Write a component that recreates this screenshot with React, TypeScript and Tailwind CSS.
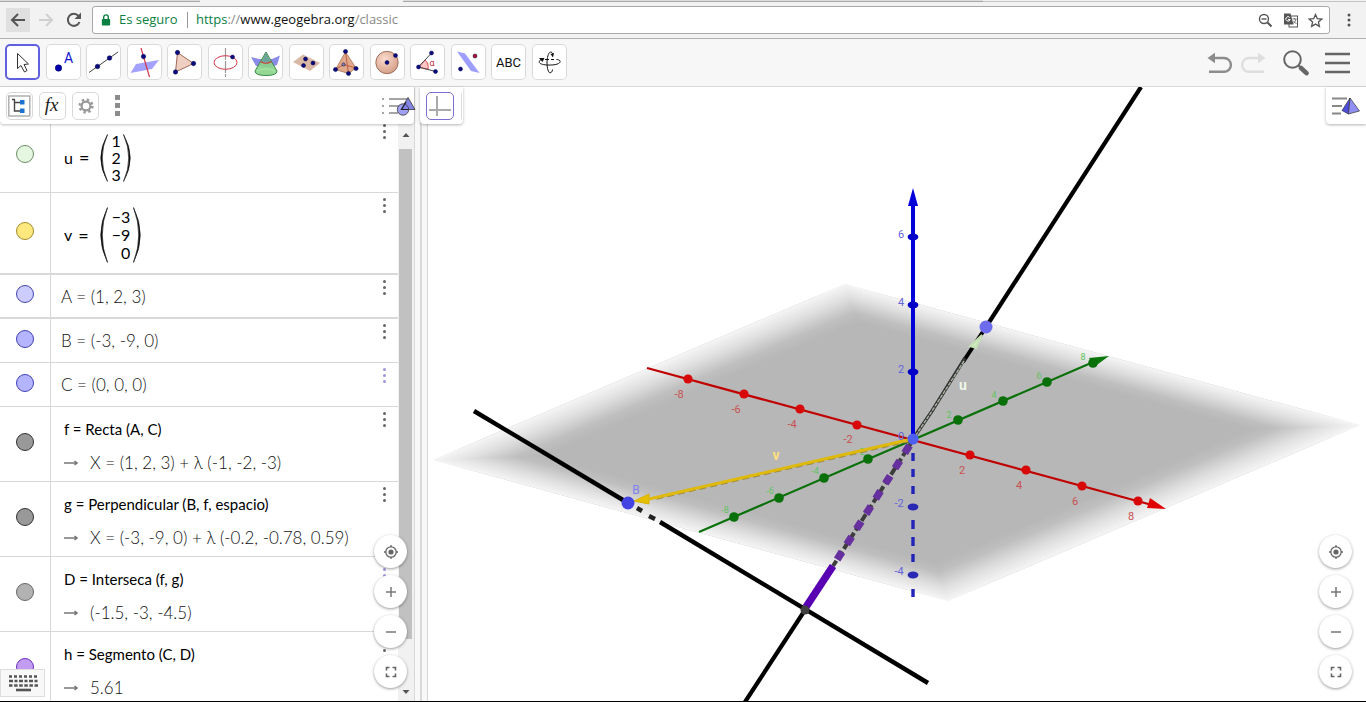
import type { ReactNode } from "react";
import clsx from "clsx";

type Tool = {
    name: string;
    icon: ReactNode;
};

type AlgebraItem = {
    label: string;
    color: string;
    height: string;
    auxiliary?: boolean;
    content: ReactNode;
};

type Tick = {
    x: number;
    y: number;
    text: string;
    labelX: number;
    labelY: number;
};

const NAVY = "#0b0b80";

function Dot({ x, y, r = 2, fill = NAVY }: { x: number; y: number; r?: number; fill?: string }) {
    return <circle cx={x} cy={y} r={r} fill={fill} stroke="#00004a" strokeWidth="0.5" />;
}

const tools: Tool[] = [
    {
        name: "Elige y mueve",
        icon: (
            <path
                d="M11.5 8.5 V23.5 L15 20.5 L18.5 27 L21 25.5 L18 19.5 L22.5 19 Z"
                fill="#fff"
                stroke="#333"
                strokeWidth="1"
            />
        ),
    },
    {
        name: "Punto",
        icon: (
            <>
                <circle cx="11.5" cy="23" r="3.2" fill="#0000b0" stroke="#00005a" strokeWidth="0.6" />
                <text x="17" y="18" fontSize="14" fill="#1414d2">
                    A
                </text>
            </>
        ),
    },
    {
        name: "Recta",
        icon: (
            <>
                <path d="M2 27.5 L31 7" stroke="#444" strokeWidth="1" />
                <Dot x={10.5} y={21.5} r={2.3} />
                <Dot x={22.5} y={13} r={2.3} />
            </>
        ),
    },
    {
        name: "Recta perpendicular",
        icon: (
            <>
                <path d="M8 19 L31 15 L24 24 L2.5 28 Z" fill="#a3a3ff" />
                <path d="M13 3 L21.5 32" stroke="#d2384b" strokeWidth="1.2" />
                <Dot x={15.5} y={11.5} r={2.2} />
            </>
        ),
    },
    {
        name: "Polígono",
        icon: (
            <>
                <path d="M9.5 7.5 L25.5 18.5 L7.5 27 Z" fill="#f0cfc3" stroke="#a06a58" strokeWidth="1" />
                <Dot x={9.5} y={7.5} r={2.2} />
                <Dot x={25.5} y={18.5} r={2.2} />
                <Dot x={7.5} y={27} r={2.2} />
            </>
        ),
    },
    {
        name: "Circunferencia",
        icon: (
            <>
                <path d="M16.5 3 V32" stroke="#999" strokeWidth="1.2" strokeDasharray="12 1" />
                <ellipse cx="16.5" cy="17.5" rx="11.5" ry="6.8" fill="none" stroke="#d2384b" strokeWidth="1" />
                <Dot x={23.5} y={12} r={2} />
            </>
        ),
    },
    {
        name: "Intersección",
        icon: (
            <>
                <path d="M2 12 L10 14 L23 14 L31 10.5 L28 20 L20 22.5 L7 21 Z" fill="#8b8bea" />
                <path d="M17 7 L6 26 Q6 30.5 17 30.5 Q28 30.5 28 26 Z" fill="#8ad48a" fillOpacity="0.9" stroke="#3b8b4a" />
                <path d="M17 7.5 L12.5 16.5 Q17 19 21.5 16.5 Z" fill="#6aa49a" />
                <path d="M11.5 16.5 Q17 20 22.5 16.5" stroke="#d23b3b" strokeWidth="1.2" fill="none" />
                <path d="M8 26 Q17 22 26 26" stroke="#a8e8a8" fill="none" />
            </>
        ),
    },
    {
        name: "Plano por tres puntos",
        icon: (
            <>
                <path d="M3 17 L13 9.5 L30 18 L20 26 Z" fill="#d9b8a6" />
                <Dot x={15.5} y={14} />
                <Dot x={23} y={18} />
                <Dot x={13.5} y={20.5} />
            </>
        ),
    },
    {
        name: "Pirámide",
        icon: (
            <>
                <path d="M15.5 7 L5.5 24.5 L18.5 28.5 L26 23 Z" fill="#e0a98e" stroke="#a8704f" strokeWidth="0.8" />
                <path d="M15.5 7 L18.5 28.5 M5.5 24.5 L13.5 19.5 L26 23" stroke="#b4502f" strokeWidth="0.8" fill="none" />
                <Dot x={13.5} y={19.5} r={1.6} fill="#8080a8" />
                <Dot x={15.5} y={6.5} r={2.1} />
                <Dot x={5.5} y={24.5} r={2.1} />
                <Dot x={18.5} y={28.5} r={2.1} />
                <Dot x={26} y={23.5} r={2.1} />
            </>
        ),
    },
    {
        name: "Esfera",
        icon: (
            <>
                <circle cx="16" cy="17.5" r="11.2" fill="url(#sphere)" stroke="#8c5a48" strokeWidth="0.8" />
                <Dot x={16} y={17.5} />
                <Dot x={24.5} y={10.5} />
            </>
        ),
    },
    {
        name: "Ángulo",
        icon: (
            <>
                <path d="M7.5 22 L14 15 Q18 18 17 24.5 Z" fill="#ffc4c4" stroke="#d2384b" strokeWidth="0.9" />
                <path d="M20.5 8 L7.5 22 L24.5 26.5" stroke="#444" strokeWidth="1" fill="none" />
                <text x="18.5" y="20.5" fontSize="9" fill="#c8283c">
                    α
                </text>
                <Dot x={20.5} y={8} />
                <Dot x={7.5} y={22} />
                <Dot x={24.5} y={26.5} />
            </>
        ),
    },
    {
        name: "Simetría",
        icon: (
            <>
                <path d="M5 6.5 L13 8.5 L27.5 28 L19 26 Z" fill="#9d9dff" />
                <Dot x={8.5} y={24} />
                <Dot x={23} y={11} fill="#b01020" />
            </>
        ),
    },
    {
        name: "Texto",
        icon: (
            <text x="16.5" y="22" fontSize="13" fill="#111" textAnchor="middle">
                ABC
            </text>
        ),
    },
    {
        name: "Rota la vista gráfica 3D",
        icon: (
            <g fill="none" stroke="#111" strokeWidth="1">
                <path d="M20 9 C18 5 14.5 7 14 17 C14 25 16 29 18 27.5 C19 27 19.5 25.5 19.5 24.5" />
                <path d="M8 14.5 C4.5 17 6 19.5 14 20 C24 20.5 28 18 27 16 C26.5 15 25 14.5 23.5 14.5" />
                <path d="M12 14.5 H21" strokeDasharray="4 2" />
                <path d="M21 8 L20 12.5 L17.5 9 Z M6 13 L11.5 13 L9.5 17 Z" fill="#111" stroke="none" />
            </g>
        ),
    },
];

function Matrix({ values, tall }: { values: string[]; tall?: boolean }) {
    const size = tall ? "h-[56px]" : "h-[48px]";

    return (
        <span className="ml-2.5 flex items-center">
            <svg viewBox="0 0 9 48" preserveAspectRatio="none" className={clsx("w-[9px]", size)} aria-hidden="true">
                <path d="M8.5 0.5 Q-5 24 8.5 47.5 Q-2 24 8.5 0.5" fill="#111" stroke="#111" strokeWidth="0.6" />
            </svg>
            <span
                className={clsx(
                    "flex flex-col text-right",
                    tall ? "pr-[3px] pl-1 leading-[18px]" : "pr-0.5 pl-[3px] leading-[17px]"
                )}
            >
                {values.map((value) => (
                    <span key={value}>{value}</span>
                ))}
            </span>
            <svg viewBox="0 0 9 48" preserveAspectRatio="none" className={clsx("w-[9px]", size)} aria-hidden="true">
                <path d="M0.5 0.5 Q14 24 0.5 47.5 Q11 24 0.5 0.5" fill="#111" stroke="#111" strokeWidth="0.6" />
            </svg>
        </span>
    );
}

function VectorDefinition({ name, values, tall }: { name: string; values: string[]; tall?: boolean }) {
    return (
        <div className="flex h-full items-center pt-1 pl-[13px] text-[16px] text-black">
            <span>{name}</span>
            <span className="ml-1.5 text-[18px]">=</span>
            <Matrix values={values} tall={tall} />
        </div>
    );
}

function PointDefinition({ text }: { text: string }) {
    return <div className="flex h-full items-center pt-px pl-2.5 text-[17px] font-light text-[#111]">{text}</div>;
}

function CommandDefinition({ command, output }: { command: string; output: string }) {
    return (
        <div className="pt-[5px] pl-[13px]">
            <p className="text-[15px] leading-[34px] text-black">{command}</p>
            <p className="flex items-center text-[17px] leading-[34px] font-light text-[#111]">
                <svg viewBox="0 0 14 8" className="mr-3 h-2 w-3.5" aria-hidden="true">
                    <path d="M0 4 H13 M10.5 2 L13 4 L10.5 6" stroke="#777" strokeWidth="1.5" fill="none" />
                </svg>
                {output}
            </p>
        </div>
    );
}

const algebraItems: AlgebraItem[] = [
    {
        label: "u",
        color: "bg-[#e6f7e1] border-[#6b8f65]",
        height: "h-[74px] border-b",
        content: <VectorDefinition name="u" values={["1", "2", "3"]} />,
    },
    {
        label: "v",
        color: "bg-[#ffe97f] border-[#a08a2c]",
        height: "h-[82px] border-b-2",
        content: <VectorDefinition name="v" values={["−3", "−9", "0"]} tall />,
    },
    {
        label: "A",
        color: "bg-[#ccccff] border-[#4545b0]",
        height: "h-[44px] border-b-2",
        content: <PointDefinition text="A = (1, 2, 3)" />,
    },
    {
        label: "B",
        color: "bg-[#b5b5ff] border-[#4040b8]",
        height: "h-[44px] border-b",
        content: <PointDefinition text="B = (-3, -9, 0)" />,
    },
    {
        label: "C",
        color: "bg-[#b5b5ff] border-[#4040b8]",
        height: "h-[44px] border-b",
        auxiliary: true,
        content: <PointDefinition text="C = (0, 0, 0)" />,
    },
    {
        label: "f",
        color: "bg-[#999999] border-[#333333]",
        height: "h-[75px] border-b",
        content: <CommandDefinition command="f = Recta (A, C)" output="X = (1, 2, 3) + λ (-1, -2, -3)" />,
    },
    {
        label: "g",
        color: "bg-[#999999] border-[#333333]",
        height: "h-[75px] border-b",
        content: (
            <CommandDefinition
                command="g = Perpendicular (B, f, espacio)"
                output="X = (-3, -9, 0) + λ (-0.2, -0.78, 0.59)"
            />
        ),
    },
    {
        label: "D",
        color: "bg-[#b2b2b2] border-[#666666]",
        height: "h-[75px] border-b",
        auxiliary: true,
        content: <CommandDefinition command="D = Interseca (f, g)" output="(-1.5, -3, -4.5)" />,
    },
    {
        label: "h",
        color: "bg-[#c29cf0] border-[#6a2fc0]",
        height: "h-[75px] border-b",
        content: <CommandDefinition command="h = Segmento (C, D)" output="5.61" />,
    },
];

function AlgebraRow({ item }: { item: AlgebraItem }) {
    return (
        <li className={clsx("relative flex shrink-0 border-[#d8d8d8]", item.height)}>
            <div className="flex w-[51px] shrink-0 items-center justify-center border-r border-[#d8d8d8] pb-1">
                <button
                    type="button"
                    aria-label={`Mostrar u ocultar ${item.label}`}
                    className={clsx("size-[18px] rounded-full border", item.color)}
                />
            </div>
            <div className="min-w-0 flex-1 whitespace-nowrap">{item.content}</div>
            <button
                type="button"
                aria-label={`Opciones de ${item.label}`}
                className={clsx(
                    "absolute top-1 right-3 flex h-[17px] w-1 flex-col items-center justify-between py-px",
                    item.auxiliary ? "text-[#9c96dc]" : "text-[#666]"
                )}
            >
                <span className="size-[3px] rounded-full bg-current" />
                <span className="size-[3px] rounded-full bg-current" />
                <span className="size-[3px] rounded-full bg-current" />
            </button>
        </li>
    );
}

function ZoomControls({ className }: { className?: string }) {
    const buttonClass =
        "flex size-[33px] items-center justify-center rounded-full bg-white shadow-[0_1px_3px_rgba(0,0,0,0.4)]";

    return (
        <div className={clsx("absolute bottom-[13px] flex flex-col gap-[7px]", className)}>
            <button type="button" aria-label="Vista estándar" className={buttonClass}>
                <svg viewBox="0 0 16 16" className="size-4" fill="none" stroke="#666" strokeWidth="1.3">
                    <circle cx="8" cy="8" r="5.2" />
                    <circle cx="8" cy="8" r="2.6" fill="#666" stroke="none" />
                    <path d="M8 1 V3 M8 13 V15 M1 8 H3 M13 8 H15" />
                </svg>
            </button>
            <button type="button" aria-label="Acercar" className={buttonClass}>
                <svg viewBox="0 0 16 16" className="size-4" stroke="#777" strokeWidth="1.5">
                    <path d="M3 8 H13 M8 3 V13" />
                </svg>
            </button>
            <button type="button" aria-label="Alejar" className={buttonClass}>
                <svg viewBox="0 0 16 16" className="size-4" stroke="#777" strokeWidth="1.5">
                    <path d="M3 8 H13" />
                </svg>
            </button>
            <button type="button" aria-label="Pantalla completa" className={buttonClass}>
                <svg viewBox="0 0 16 16" className="size-4" fill="none" stroke="#666" strokeWidth="1.6">
                    <path d="M3.5 6.5 V3.5 H6.5 M9.5 3.5 H12.5 V6.5 M12.5 9.5 V12.5 H9.5 M6.5 12.5 H3.5 V9.5" />
                </svg>
            </button>
        </div>
    );
}

function BrowserBar() {
    return (
        <header className="shrink-0 border-b border-[#b0b0b0] bg-[#f2f2f2]">
            <div className="flex h-0.5">
                <span className="w-[200px] border-b border-[#a8a8a8] bg-[#dcdcdc]" />
                <span className="w-[203px]" />
                <span className="w-[580px] border-b border-[#a8a8a8] bg-[#dcdcdc]" />
                <span className="flex-1 border-b border-[#c4c4c4]" />
            </div>
            <div className="flex h-9 items-center pr-3.5 pl-1.5">
                <button type="button" aria-label="Atrás" className="flex size-6 items-center justify-center bg-[#e0e0e0]">
                    <svg viewBox="0 0 16 16" className="size-4" fill="none" stroke="#555" strokeWidth="2">
                        <path d="M15 8 H2.5 M8 2 L2 8 L8 14" />
                    </svg>
                </button>
                <button type="button" aria-label="Adelante" className="ml-1 flex size-6 items-center justify-center">
                    <svg viewBox="0 0 16 16" className="size-4" fill="none" stroke="#d0d0d0" strokeWidth="2">
                        <path d="M1 8 H13.5 M8 2 L14 8 L8 14" />
                    </svg>
                </button>
                <button type="button" aria-label="Recargar" className="ml-1 flex size-6 items-center justify-center">
                    <svg viewBox="0 0 16 16" className="size-4" fill="none" stroke="#555" strokeWidth="2">
                        <path d="M13.5 10 A6 6 0 1 1 12.5 4" />
                        <path d="M15 0.5 V7 H8.5 Z" fill="#555" stroke="none" />
                    </svg>
                </button>
                <div className="ml-1.5 flex h-7 min-w-0 flex-1 items-center rounded-[3px] border border-[#a9a9a9] bg-white pr-1.5 pl-2 font-['Open_Sans',sans-serif] text-[13px]">
                    <svg viewBox="0 0 10 13" className="h-3 w-2.5" aria-hidden="true">
                        <path d="M2.5 6 V3.5 A2.5 2.5 0 0 1 7.5 3.5 V6" fill="none" stroke="#0b8043" strokeWidth="1.5" />
                        <rect x="0.5" y="5.5" width="9" height="7" rx="0.8" fill="#0b8043" />
                    </svg>
                    <span className="ml-2 w-[60px] whitespace-nowrap text-[#0b8043]">Es seguro</span>
                    <span className="ml-2 h-4 w-px bg-[#999]" />
                    <div
                        role="textbox"
                        aria-label="Dirección"
                        className="ml-2 flex-1 whitespace-nowrap text-[#888]"
                    >
                        <span className="text-[#0b8043]">https</span>://
                        <span className="text-[#111]">www.geogebra.org</span>/classic
                    </div>
                    <div className="flex items-center gap-2.5">
                        <button type="button" aria-label="Zoom">
                            <svg viewBox="0 0 15 15" className="size-[15px]" fill="none" stroke="#555" strokeWidth="1.4">
                                <circle cx="6" cy="6" r="4.5" />
                                <path d="M3.5 6 H8.5" />
                                <path d="M9.5 9.5 L13.5 13.5" strokeWidth="2" />
                            </svg>
                        </button>
                        <button type="button" aria-label="Traducir esta página">
                            <svg viewBox="0 0 15 15" className="size-[15px]">
                                <rect x="6" y="3" width="8.5" height="11" fill="#fff" stroke="#555" strokeWidth="1" />
                                <path d="M1 0.5 H7.5 L10.5 11.5 H1 Z" fill="#555" />
                                <path d="M6.8 4.5 A2.2 2.2 0 1 0 7.2 6.5 H5" fill="none" stroke="#fff" strokeWidth="1" />
                                <path d="M9.5 6 H13.5 M11.5 5 V6 M13 6 Q12.5 9 10 10.5 M10.5 8 L13.5 11" fill="none" stroke="#666" strokeWidth="0.9" />
                            </svg>
                        </button>
                        <button type="button" aria-label="Añadir a marcadores">
                            <svg viewBox="0 0 15 15" className="size-[15px]" fill="none" stroke="#555" strokeWidth="1.3">
                                <path d="M7.5 1.5 L9.3 5.7 L13.8 6.1 L10.4 9 L11.4 13.4 L7.5 11.1 L3.6 13.4 L4.6 9 L1.2 6.1 L5.7 5.7 Z" />
                            </svg>
                        </button>
                    </div>
                </div>
                <button type="button" aria-label="Menú de Chrome" className="ml-4 flex h-6 w-1.5 items-center justify-center">
                    <svg viewBox="0 0 4 14" className="h-3.5 w-1" fill="#555">
                        <circle cx="2" cy="2" r="1.5" />
                        <circle cx="2" cy="7" r="1.5" />
                        <circle cx="2" cy="12" r="1.5" />
                    </svg>
                </button>
            </div>
        </header>
    );
}

function Toolbar() {
    return (
        <nav className="flex h-12 shrink-0 items-center justify-between border-b border-[#d9d9d9] bg-[#f7f7f7] pr-4 pb-px pl-[5px]">
            <svg className="absolute size-0" aria-hidden="true">
                <defs>
                    <radialGradient id="sphere" cx="0.4" cy="0.35" r="0.7">
                        <stop offset="0" stopColor="#fbdccd" />
                        <stop offset="1" stopColor="#d39c84" />
                    </radialGradient>
                </defs>
            </svg>
            <div className="flex w-[562px] justify-between">
                {tools.map((tool, index) => (
                    <button
                        key={tool.name}
                        type="button"
                        aria-label={tool.name}
                        className={clsx(
                            "h-9 w-[35px] rounded-[5px] bg-white",
                            index === 0
                                ? "shadow-[inset_0_0_0_2px_#6161e0]"
                                : "shadow-[inset_0_0_0_1px_#d9d9d9]"
                        )}
                    >
                        <svg viewBox="-1 -1 35 36" className="h-9 w-[35px] font-[Roboto,sans-serif]" fill="none">
                            {tool.icon}
                        </svg>
                    </button>
                ))}
            </div>
            <div className="flex items-center pt-px">
                <button type="button" aria-label="Deshacer" className="mr-[7px]">
                    <svg viewBox="0 0 26 22" className="h-[22px] w-[26px]" fill="none" stroke="#8c8c8c" strokeWidth="2.4">
                        <path d="M6 6 H17 A6.8 6.8 0 0 1 17 19.8 H2" />
                        <path d="M0.5 6 L8 0.8 V11.2 Z" fill="#8c8c8c" stroke="none" />
                    </svg>
                </button>
                <button type="button" aria-label="Rehacer" className="mr-[17px]">
                    <svg viewBox="0 0 26 22" className="h-[22px] w-[26px]" fill="none" stroke="#dedede" strokeWidth="2.4">
                        <path d="M20 6 H9 A6.8 6.8 0 0 0 9 19.8 H24" />
                        <path d="M25.5 6 L18 0.8 V11.2 Z" fill="#dedede" stroke="none" />
                    </svg>
                </button>
                <button type="button" aria-label="Buscar" className="mr-4">
                    <svg viewBox="0 0 26 26" className="size-[26px]" fill="none" stroke="#666">
                        <circle cx="9.5" cy="9.5" r="8.3" strokeWidth="2" />
                        <path d="M15.5 15.5 L18 18" strokeWidth="2" />
                        <path d="M18 18 L23.5 23.2" strokeWidth="4.5" strokeLinecap="round" />
                    </svg>
                </button>
                <button type="button" aria-label="Menú">
                    <svg viewBox="0 0 25 22" className="h-[22px] w-[25px]" stroke="#666" strokeWidth="2.6">
                        <path d="M0 2 H25 M0 11 H25 M0 20 H25" />
                    </svg>
                </button>
            </div>
        </nav>
    );
}

function AlgebraHeader() {
    const buttonClass = "flex h-7 w-[27px] items-center justify-center rounded-[5px] border border-[#d9d9d9] bg-white";

    return (
        <div className="relative z-10 flex h-[37px] w-full shrink-0 items-center gap-1.5 rounded-b bg-white pl-1.5 shadow-[0_1px_3px_rgba(0,0,0,0.25)]">
            <button type="button" aria-label="Objetos auxiliares" className={buttonClass}>
                <svg viewBox="0 0 23 22" className="h-[22px] w-[23px]" fill="none">
                    <rect x="0.8" y="1" width="21" height="20" stroke="#aaa" strokeWidth="1.4" />
                    <path d="M4 4.5 H7 M6.5 4.5 V16 H12 M6.5 7.5 H12" stroke="#444" strokeWidth="1.4" />
                    <rect x="12" y="5" width="4.5" height="4.5" fill="#1a73d0" />
                    <rect x="12" y="13.5" width="4.5" height="4.5" fill="#1a73d0" />
                </svg>
            </button>
            <button
                type="button"
                aria-label="Función"
                className={clsx(buttonClass, "pr-0.5 font-['Liberation_Serif',serif] text-[19px] text-[#222] italic")}
            >
                fx
            </button>
            <button type="button" aria-label="Configuración" className={buttonClass}>
                <svg viewBox="0 0 16 16" className="size-4" fill="none" stroke="#999">
                    <circle cx="8" cy="8" r="4.4" strokeWidth="2.2" />
                    <circle cx="8" cy="8" r="6.4" strokeWidth="2.4" strokeDasharray="2.4 2.62" />
                </svg>
            </button>
            <button type="button" aria-label="Más" className="ml-2.5 flex flex-col gap-[3px]">
                <span className="size-[5px] bg-[#8c8c8c]" />
                <span className="size-[5px] bg-[#8c8c8c]" />
                <span className="size-[5px] bg-[#8c8c8c]" />
            </button>
            <button type="button" aria-label="Barra de estilo" className="-mr-0.5 ml-auto">
                <svg viewBox="0 0 35 24" className="h-6 w-[35px]" fill="none">
                    <path d="M1 5 H3 M1 12 H3 M1 19 H3 M8 5 H26 M8 12 H18 M8 19 H17" stroke="#888" strokeWidth="1.7" />
                    <path d="M27 3.5 L34 15.5 H20 Z" fill="#8484e6" stroke="#444" strokeWidth="0.9" />
                    <circle cx="22" cy="15.5" r="5.7" fill="#7f7ff0" fillOpacity="0.75" stroke="#444" strokeWidth="0.9" />
                    <path d="M25 8 L20.5 15.5 H27.5" stroke="#222" strokeWidth="1.2" />
                </svg>
            </button>
        </div>
    );
}

function AlgebraPanel() {
    return (
        <section aria-label="Vista algebraica" className="relative flex w-[414px] shrink-0 flex-col bg-white">
            <AlgebraHeader />
            <div className="flex min-h-0 flex-1">
                <ul className="-mt-[5px] flex min-w-0 flex-1 flex-col overflow-hidden font-[Lato,sans-serif]">
                    {algebraItems.map((item) => (
                        <AlgebraRow key={item.label} item={item} />
                    ))}
                </ul>
                <div className="flex w-4 shrink-0 flex-col items-center bg-[#f1f1f1]">
                    <svg viewBox="0 0 14 25" className="h-[25px] w-3.5" fill="#555">
                        <path d="M3.5 13 L7 9 L10.5 13 Z" />
                    </svg>
                    <div className="mr-px w-[13px] flex-1 bg-[#c1c1c1]" />
                    <svg viewBox="0 0 14 62" className="h-[62px] w-3.5" fill="#555">
                        <path d="M3.5 51 H10.5 L7 55 Z" />
                    </svg>
                </div>
            </div>
            <ZoomControls className="right-[7px]" />
            <button
                type="button"
                aria-label="Teclado"
                className="absolute bottom-1 left-0 flex h-7 w-[45px] items-center justify-center border border-[#ddd] bg-[#f8f8f8]"
            >
                <svg viewBox="0 0 30 18" className="h-[18px] w-[30px]" stroke="#555" fill="none" strokeWidth="2.6">
                    <path d="M1 2.5 H30" strokeDasharray="3 2" />
                    <path d="M1 7 H30" strokeDasharray="4 1.5 3 1.5" />
                    <path d="M1 11.5 H30" strokeDasharray="3.5 1.6" />
                    <path d="M8 16 H23" />
                </svg>
            </button>
        </section>
    );
}

const xTicks: Tick[] = [
    { x: 688, y: 379, text: "-8", labelX: 679, labelY: 398 },
    { x: 744, y: 394, text: "-6", labelX: 736, labelY: 413 },
    { x: 800, y: 409, text: "-4", labelX: 792, labelY: 428 },
    { x: 857, y: 425, text: "-2", labelX: 848, labelY: 443 },
    { x: 970, y: 455, text: "2", labelX: 962, labelY: 474 },
    { x: 1026, y: 470, text: "4", labelX: 1019, labelY: 489 },
    { x: 1082, y: 486, text: "6", labelX: 1075, labelY: 505 },
    { x: 1138, y: 501, text: "8", labelX: 1131, labelY: 520 },
];

const yTicks: Tick[] = [
    { x: 734, y: 517, text: "-8", labelX: 725, labelY: 513 },
    { x: 779, y: 498, text: "-6", labelX: 770, labelY: 494 },
    { x: 824, y: 478, text: "-4", labelX: 815, labelY: 474 },
    { x: 868, y: 459, text: "-2", labelX: 861, labelY: 455 },
    { x: 958, y: 420, text: "2", labelX: 949, labelY: 418 },
    { x: 1003, y: 401, text: "4", labelX: 994, labelY: 398 },
    { x: 1047, y: 382, text: "6", labelX: 1039, labelY: 379 },
    { x: 1093, y: 363, text: "8", labelX: 1083, labelY: 360 },
];

const zTicks: Tick[] = [
    { x: 913, y: 237, text: "6", labelX: 901, labelY: 238 },
    { x: 913, y: 305, text: "4", labelX: 901, labelY: 306 },
    { x: 913, y: 372, text: "2", labelX: 901, labelY: 373 },
    { x: 913, y: 507, text: "-2", labelX: 899, labelY: 507 },
    { x: 913, y: 575, text: "-4", labelX: 899, labelY: 575 },
];

function Scene() {
    return (
        <svg
            viewBox="428 87 938 614"
            preserveAspectRatio="xMidYMid slice"
            className="absolute inset-0 h-full w-full font-[Roboto,sans-serif]"
            fontSize="11"
            textAnchor="middle"
            role="img"
            aria-label="Vista gráfica 3D"
        >
            <defs>
                <linearGradient id="fadeX">
                    <stop offset="0" stopColor="#f5f5f5" />
                    <stop offset="0.04" stopColor="#e0e0e0" />
                    <stop offset="0.09" stopColor="#bfbfbf" />
                    <stop offset="0.12" stopColor="#b7b7b7" />
                    <stop offset="0.88" stopColor="#b7b7b7" />
                    <stop offset="0.91" stopColor="#bfbfbf" />
                    <stop offset="0.96" stopColor="#e0e0e0" />
                    <stop offset="1" stopColor="#f5f5f5" />
                </linearGradient>
                <linearGradient id="fadeY" href="#fadeX" x1="0" y1="0" x2="0" y2="1" />
            </defs>

            {/* plane z = 0, fading towards all four edges */}
            <g transform="matrix(4.12 -1.76 5.15 1.41 433 460)" className="isolate">
                <rect width="100" height="100" fill="url(#fadeX)" />
                <rect width="100" height="100" fill="url(#fadeY)" className="mix-blend-lighten" />
            </g>

            {/* x axis */}
            <g fill="#e00000">
                <path d="M647 368 L1152 505" stroke="#c00000" strokeWidth="2.2" />
                <path d="M1150 498 L1166 509 L1147 508 Z" />
                {xTicks.map((tick) => (
                    <circle key={tick.text} cx={tick.x} cy={tick.y} r="4.6" fill="#d80808" />
                ))}
            </g>
            <g fill="#c85050">
                {xTicks.map((tick) => (
                    <text key={tick.text} x={tick.labelX} y={tick.labelY}>
                        {tick.text}
                    </text>
                ))}
            </g>

            {/* y axis */}
            <path d="M699 532 L1098 360" stroke="#0a700a" strokeWidth="2.2" />
            <path d="M1109 356 L1089 358 L1094 367 Z" fill="#0a780a" />
            {yTicks.map((tick) => (
                <circle key={tick.text} cx={tick.x} cy={tick.y} r="4.8" fill="#0a700a" />
            ))}
            <g fill="#62c462" fontSize="9">
                {yTicks.map((tick) => (
                    <text key={tick.text} x={tick.labelX} y={tick.labelY}>
                        {tick.text}
                    </text>
                ))}
            </g>

            {/* line f between A and the origin, with vector u on it */}
            <path d="M986 327 L963 362" stroke="#000" strokeWidth="4" />
            <path d="M965 358 L932 411 L915 436" stroke="#333" strokeWidth="3.4" fill="none" />
            <path d="M964 361 L932 411 L916 435" stroke="#a9b3a2" strokeWidth="1.4" strokeDasharray="4 1" fill="none" />
            <path d="M982 335 L970 346 L976 348 Z" fill="#cfe8c0" stroke="#c3dfb3" strokeWidth="2" />

            {/* z axis */}
            <path d="M913 200 V440" stroke="#0000d8" strokeWidth="4" />
            <path d="M913 188 L918 206 H908 Z" fill="#0000d8" />
            <path
                d="M913 453 V461 M913 469 V477 M913 486 V494 M913 520 V529 M913 537 V546 M913 554 V562 M913 589 V597"
                stroke="#2323b8"
                strokeWidth="3.4"
            />
            {zTicks.map((tick) => (
                <ellipse
                    key={tick.text}
                    cx={tick.x}
                    cy={tick.y}
                    rx="5.4"
                    ry="3.4"
                    fill={tick.y > 440 ? "#2929b4" : "#0000c8"}
                />
            ))}
            <g fill="#6464dc">
                {zTicks.map((tick) => (
                    <text key={tick.text} x={tick.labelX} y={tick.labelY}>
                        {tick.text}
                    </text>
                ))}
                <text x="901" y="440">
                    0
                </text>
            </g>

            {/* vector v */}
            <path d="M910 441 L655 499" stroke="#9c8a3c" strokeWidth="2" strokeDasharray="7 4" />
            <path d="M912 439 L649 499" stroke="#dfb90c" strokeWidth="3" />
            <path d="M634 501 L649 494 L649 504 Z" fill="#e6bf00" stroke="#d8b200" />

            {/* line f */}
            <path d="M1141 87 L986 327" stroke="#000" strokeWidth="4.2" />
            <path d="M913 440 L833 566" stroke="#3d3d3d" strokeWidth="4" strokeDasharray="8 3" />
            <path d="M909.5 445.5 L833 566" stroke="#66309e" strokeWidth="7.5" strokeDasharray="9 9" />
            <path d="M833 566 L806 607" stroke="#5900b3" strokeWidth="7.5" />
            <path d="M805 610 L745 702" stroke="#000" strokeWidth="4.2" />

            {/* line g */}
            <path d="M474 411 L628 503" stroke="#000" strokeWidth="4.4" />
            <path d="M637 508 L642 511 M649 516 L655 519" stroke="#222" strokeWidth="4.4" />
            <path d="M660 522 L928 683" stroke="#000" strokeWidth="4.4" />

            <circle cx="986" cy="327" r="6.5" fill="#6c6cec" />
            <circle cx="628" cy="503" r="6.5" fill="#4444e2" />
            <circle cx="913" cy="439" r="5.5" fill="#4f5ff0" />
            <circle cx="805" cy="610" r="4.5" fill="#404040" />

            <text x="636" y="494" fontSize="12" fill="#8080f0">
                B
            </text>
            <text x="776" y="460" fontSize="14" fontWeight="700" fill="#ffdf80">
                v
            </text>
            <text x="963" y="390" fontSize="14" fontWeight="700" fill="#eef7e8">
                u
            </text>
        </svg>
    );
}

function GraphicsView() {
    return (
        <section aria-label="Gráficos 3D" className="relative min-w-0 flex-1 bg-white">
            <Scene />
            <div className="absolute top-0 -left-2 flex h-[37px] w-[43px] items-center justify-between overflow-hidden rounded-b bg-white pl-1.5 shadow-[0_1px_3px_rgba(0,0,0,0.3)]">
                <button
                    type="button"
                    aria-label="Mostrar ejes"
                    className="flex size-7 items-center justify-center rounded-[5px] border border-[#7a6fd0] bg-white"
                >
                    <svg viewBox="0 0 24 24" className="size-6" stroke="#aaa" strokeWidth="2">
                        <path d="M9 2 V22 M1 16 H23" />
                    </svg>
                </button>
                <span className="h-7 w-0.5 rounded-l border-l border-[#ddd]" />
            </div>
            <button
                type="button"
                aria-label="Barra de estilo 3D"
                className="absolute top-0 right-0 flex h-[37px] w-10 items-center justify-end rounded-bl bg-white pr-1.5 shadow-[0_1px_3px_rgba(0,0,0,0.3)]"
            >
                <svg viewBox="0 0 28 20" className="h-5 w-7" fill="none">
                    <path d="M0 2.5 H15 M0 10 H10 M0 17.5 H9" stroke="#888" strokeWidth="1.8" />
                    <path d="M18 2 L10 14.5 L16.5 18 Z" fill="#4d4de0" stroke="#333" strokeWidth="0.7" />
                    <path d="M18 2 L16.5 18 L27.5 15 Z" fill="#9090f4" stroke="#333" strokeWidth="0.7" />
                </svg>
            </button>
            <ZoomControls className="right-3.5" />
        </section>
    );
}

function App() {
    return (
        <div className="flex h-screen flex-col overflow-hidden border-b border-black bg-white">
            <BrowserBar />
            <Toolbar />
            <main className="flex min-h-0 flex-1">
                <AlgebraPanel />
                <div className="flex w-3.5 shrink-0 justify-center border-x border-[#d8d8d8] bg-[#f8f8f8]">
                    <div className="w-0.5 bg-[#dadada]" />
                </div>
                <GraphicsView />
            </main>
        </div>
    );
}

export default App;
